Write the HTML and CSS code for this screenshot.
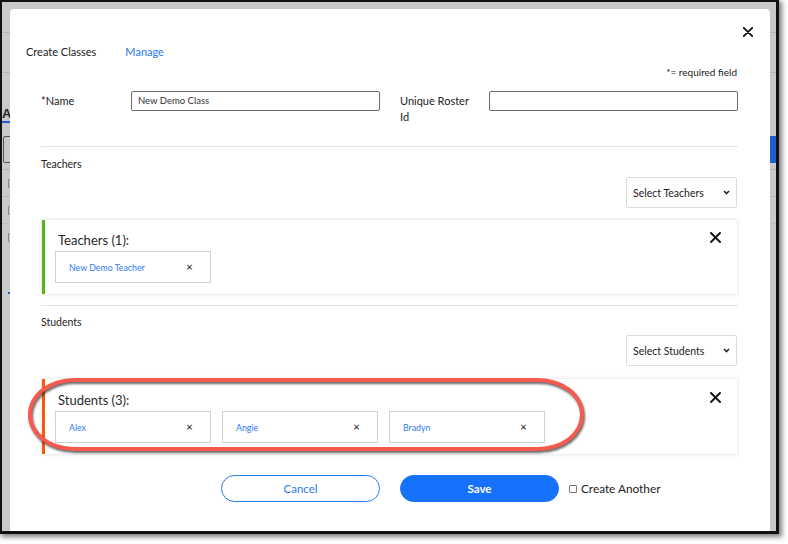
FILE: index.html
```html
<!DOCTYPE html>
<html>
<head>
<meta charset="utf-8">
<title>Create Classes</title>
<link rel="stylesheet" href="styles.css">
</head>
<body>
<div class="frame">
  <div class="backdrop">
    <div class="bd-row bd-top"></div>
    <div class="bd-row bd-nav"></div>
    <div class="bd-head"><span class="bd-a">A</span></div>
    <div class="bd-search"><span class="bd-input"></span><span class="bd-btn"></span></div>
    <div class="bd-list">
      <div class="bd-item"><span class="bd-check"></span></div>
      <div class="bd-item bd-dotted"><span class="bd-check"></span></div>
      <div class="bd-item bd-last"><span class="bd-check"></span></div>
      <div class="bd-dot"></div>
    </div>
  </div>

  <div class="modal">
    <svg class="close" width="10" height="10" viewBox="0 0 10 10"><path d="M0.8 0.8 L9.2 9.2 M9.2 0.8 L0.8 9.2" stroke="#111" stroke-width="1.8" stroke-linecap="round"/></svg>

    <div class="tabs">
      <span class="tab">Create Classes</span>
      <span class="tab tab-link">Manage</span>
    </div>
    <div class="req">*= required field</div>

    <div class="form-row">
      <label class="f-label">*Name</label>
      <div class="f-input">New Demo Class</div>
      <label class="f-label f-label2">Unique Roster Id</label>
      <div class="f-input"></div>
    </div>

    <hr class="sep sep1">
    <div class="sec-label">Teachers</div>
    <div class="select-row">
      <div class="select"><span>Select Teachers</span><svg width="7" height="5" viewBox="0 0 7 5"><path d="M1 1 L3.5 3.6 L6 1" fill="none" stroke="#222" stroke-width="1.5"/></svg></div>
    </div>
    <div class="card card-green">
      <div class="card-head">
        <span class="card-title">Teachers (1):</span>
        <svg class="card-x" width="11" height="11" viewBox="0 0 11 11"><path d="M1 1 L10 10 M10 1 L1 10" stroke="#111" stroke-width="1.9" stroke-linecap="round"/></svg>
      </div>
      <div class="chips">
        <div class="chip"><span class="chip-name">New Demo Teacher</span><span class="chip-x">×</span></div>
      </div>
    </div>

    <hr class="sep sep2">
    <div class="sec-label sec-label2">Students</div>
    <div class="select-row">
      <div class="select"><span>Select Students</span><svg width="7" height="5" viewBox="0 0 7 5"><path d="M1 1 L3.5 3.6 L6 1" fill="none" stroke="#222" stroke-width="1.5"/></svg></div>
    </div>
    <div class="card card-orange">
      <div class="card-head">
        <span class="card-title">Students (3):</span>
        <svg class="card-x" width="11" height="11" viewBox="0 0 11 11"><path d="M1 1 L10 10 M10 1 L1 10" stroke="#111" stroke-width="1.9" stroke-linecap="round"/></svg>
      </div>
      <div class="chips">
        <div class="chip"><span class="chip-name">Alex</span><span class="chip-x">×</span></div>
        <div class="chip"><span class="chip-name">Angie</span><span class="chip-x">×</span></div>
        <div class="chip"><span class="chip-name">Bradyn</span><span class="chip-x">×</span></div>
      </div>
    </div>

    <div class="actions">
      <button class="btn btn-cancel">Cancel</button>
      <button class="btn btn-save">Save</button>
      <label class="another"><span class="cb"></span>Create Another</label>
    </div>

    <div class="annot"></div>
  </div>
</div>
</body>
</html>
```

FILE: styles.css
```css
html, body {
  margin: 0;
  padding: 0;
  background: #fff;
}
body {
  font-family: "Lato", "Liberation Sans", sans-serif;
  color: #222;
  width: 788px;
  height: 544px;
  overflow: hidden;
}

.frame {
  position: relative;
  width: 779px;
  height: 534px;
  box-sizing: border-box;
  border: 2px solid #111;
  border-width: 2px 3px 3px 2px;
  box-shadow: 2px 2px 5px 1px rgba(0, 0, 0, 0.5);
  overflow: hidden;
  background: #c9c9c9;
}

/* backdrop page under the overlay */
.backdrop {
  display: flex;
  flex-direction: column;
}
.bd-row {
  border-bottom: 1px solid #b4b4b4;
}
.bd-top { height: 30px; }
.bd-nav { height: 39px; }
.bd-head {
  height: 50px;
  display: flex;
  align-items: flex-end;
}
.bd-a {
  font: bold 13px "Liberation Sans", sans-serif;
  color: #222;
  border-bottom: 2px solid #1f5fd1;
  padding: 0 4px 0 0;
  line-height: 14px;
}
.bd-search {
  height: 36px;
  margin-top: 4px;
  display: flex;
  justify-content: space-between;
  align-items: flex-end;
}
.bd-input {
  width: 100px;
  height: 25px;
  margin-left: 1px;
  border: 1px solid #555;
  border-radius: 2px;
}
.bd-btn {
  width: 40px;
  height: 27px;
  background: #1f5fd1;
}
.bd-list {
  margin-top: 6px;
  display: flex;
  flex-direction: column;
}
.bd-item {
  height: 26px;
  border-top: 1px solid #b4b4b4;
  display: flex;
  align-items: center;
}
.bd-dotted { border-bottom: 1px dotted #b4b4b4; }
.bd-last { border-top: none; }
.bd-check {
  width: 7px;
  height: 7px;
  margin-left: 6px;
  border: 1px solid #888;
  border-radius: 1px;
}
.bd-dot {
  width: 2px;
  height: 2px;
  margin: 42px 0 0 6px;
  background: #1f5fd1;
}

/* modal */
.modal {
  position: absolute;
  left: 8px;
  top: 7px;
  width: 760px;
  height: 540px;
  box-sizing: border-box;
  background: #fff;
  border-radius: 4px 4px 0 0;
  padding: 35px 32px 0 31px;
  display: flex;
  flex-direction: column;
}
.close {
  position: absolute;
  top: 18px;
  right: 17px;
}

.tabs {
  display: flex;
  gap: 29px;
  margin-left: -15px;
  font-size: 11px;
  line-height: 16px;
}
.tab-link { color: #2a78e4; }

.req {
  margin-top: 5px;
  font-size: 10px;
  line-height: 14px;
  text-align: right;
  padding-right: 1px;
}

.form-row {
  margin-top: 12px;
  display: flex;
  align-items: flex-start;
}
.f-label {
  width: 90px;
  flex: none;
  font-size: 11px;
  line-height: 16px;
  padding-top: 2px;
}
.f-label2 {
  width: 70px;
  margin-left: 20px;
  margin-right: 19px;
}
.f-input {
  width: 249px;
  height: 20px;
  flex: none;
  box-sizing: border-box;
  border: 1px solid #6a6a6a;
  border-radius: 2px;
  font-size: 9.5px;
  line-height: 18px;
  padding-left: 6px;
  color: #333;
}

.sep {
  border: none;
  border-top: 1px solid #e2e2e2;
  margin: 0;
}
.sep1 { margin-top: 21px; }
.sep2 { margin-top: 11px; }

.sec-label {
  margin-top: 9px;
  font-size: 10.5px;
  line-height: 16px;
}
.sec-label2 { margin-top: 8px; }

.select-row {
  margin-top: 5px;
  display: flex;
  justify-content: flex-end;
  padding-right: 1px;
}
.select {
  width: 111px;
  height: 31px;
  box-sizing: border-box;
  border: 1px solid #dcdcdc;
  border-radius: 2px;
  display: flex;
  align-items: center;
  justify-content: space-between;
  padding: 0 6px 0 6px;
  font-size: 10.5px;
}

.card {
  margin-top: 12px;
  margin-left: 1px;
  margin-right: 1px;
  box-sizing: border-box;
  height: 74px;
  padding: 10px 16px 0 10px;
  background: #fff;
  box-shadow: 0 0 4px rgba(0, 0, 0, 0.16);
}
.card-green { border-left: 3px solid #55b51b; }
.card-orange {
  border-left: 3px solid #f45b10;
  margin-top: 13px;
  padding-top: 11px;
  height: 75px;
}
.card-head {
  display: flex;
  justify-content: space-between;
  align-items: flex-start;
  height: 20px;
}
.card-title {
  margin-left: 3px;
  font-size: 13px;
  line-height: 20px;
  color: #2a2a2a;
}
.card-x { margin-top: 2px; }

.chips {
  margin-top: 1px;
  display: flex;
  gap: 11px;
}
.chip {
  width: 156px;
  height: 32px;
  box-sizing: border-box;
  border: 1px solid #d2d2d2;
  display: flex;
  align-items: center;
  justify-content: space-between;
  padding: 0 17px 0 13px;
}
.chip-name {
  color: #2a7cf2;
  font-size: 8.8px;
}
.chip-x {
  font-size: 12px;
  color: #222;
  line-height: 10px;
}

.actions {
  margin-top: 21px;
  margin-left: 180px;
  display: flex;
  align-items: center;
}
.btn {
  width: 159px;
  height: 27px;
  box-sizing: border-box;
  border-radius: 14px;
  font-family: inherit;
  font-size: 11.5px;
  padding: 0;
}
.btn-cancel {
  background: #fff;
  border: 1px solid #2a78ee;
  color: #2a78ee;
}
.btn-save {
  margin-left: 20px;
  background: #1772fb;
  border: 1px solid #1772fb;
  color: #fff;
  font-weight: 700;
}
.another {
  margin-left: 10px;
  display: flex;
  align-items: center;
  font-size: 11.8px;
  color: #222;
}
.cb {
  width: 8px;
  height: 8px;
  box-sizing: border-box;
  border: 1px solid #777;
  border-radius: 1px;
  margin-right: 4px;
}

.annot {
  position: absolute;
  left: 18px;
  top: 369px;
  width: 556px;
  height: 73px;
  box-sizing: border-box;
  border: 4px solid #f45a4e;
  border-radius: 46px / 36px;
  filter: drop-shadow(1.5px 2px 1px rgba(0, 0, 0, 0.6));
}
```
